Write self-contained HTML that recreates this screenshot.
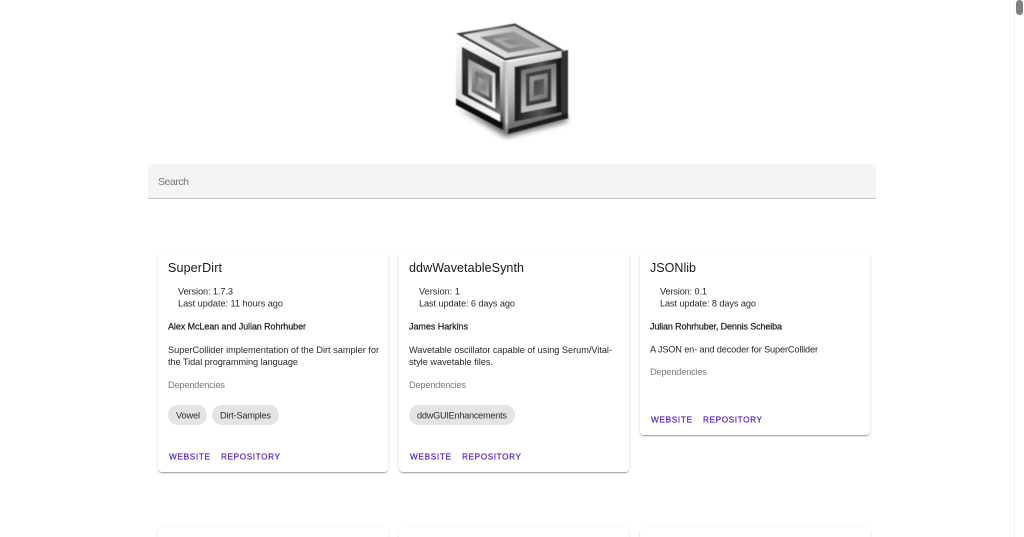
<!DOCTYPE html>
<html lang="en"><head><meta charset="utf-8"><title>Quarks</title>
<style>
html,body{margin:0;padding:0;background:#fff;overflow:hidden;height:537px}
body{width:1024px;height:537px;position:relative;font-family:"Liberation Sans",sans-serif}
.card{position:absolute;background:#fff;border-radius:4px;width:230px;box-shadow:0 2px 1px -1px rgba(0,0,0,.2),0 1px 1px 0 rgba(0,0,0,.14),0 1px 3px 0 rgba(0,0,0,.12)}
.search{position:absolute;left:148px;top:164px;width:728px;height:34px;background:#f5f5f5;border-bottom:1px solid #c4c4c4;border-radius:2px 2px 0 0}
.track{position:absolute;left:1014px;top:0;width:10px;height:537px;background:#fff;border-left:1px solid #efefef;box-sizing:border-box}
.thumb{position:absolute;left:1016px;top:0;width:7px;height:15px;background:#808080;border-radius:3.5px}
.chip{position:absolute;height:20px;border-radius:10px;background:#e4e4e4}
svg.t{position:absolute;left:0;top:0}
text{font-family:"Liberation Sans",sans-serif;fill:#222}
.h{font-size:12.5px;fill:#1a1a1a}
.b{font-size:9.2px;fill:#2a2a2a}
.s{font-size:9px;fill:#222;stroke:#222;stroke-width:.22px}
.d{font-size:9.2px;fill:#7a7a7a}
.c{font-size:9.2px;fill:#2c2c2c}
.a{font-size:8.2px;fill:#5a22c8;stroke:#5a22c8;stroke-width:.22px}
.q{font-size:10.5px;fill:#777}
</style></head><body>
<div class="search"></div>
<div class="card" style="left:158px;top:252px;height:220px"></div>
<div class="card" style="left:399px;top:252px;height:220px"></div>
<div class="card" style="left:640px;top:252px;height:183px"></div>
<div class="card" style="left:158px;top:528px;height:9px;border-radius:4px 4px 0 0"></div>
<div class="card" style="left:399px;top:528px;height:9px;border-radius:4px 4px 0 0"></div>
<div class="card" style="left:640px;top:528px;height:9px;border-radius:4px 4px 0 0"></div>
<div class="chip" style="left:168px;top:405px;width:39px"></div>
<div class="chip" style="left:212px;top:405px;width:67px"></div>
<div class="chip" style="left:409px;top:405px;width:106px"></div>
<div class="track"></div><div class="thumb"></div>

<svg class="t" width="1024" height="537" viewBox="0 0 1024 537" xmlns="http://www.w3.org/2000/svg">
<defs>
<filter id="bl" x="-30%" y="-100%" width="160%" height="300%"><feGaussianBlur stdDeviation="3"/></filter>
<filter id="sf" x="-5%" y="-5%" width="110%" height="110%"><feGaussianBlur stdDeviation=".45"/></filter>
<linearGradient id="l0" x1="0" y1="0" x2=".9" y2="1"><stop offset="0" stop-color="#fff"/><stop offset=".5" stop-color="#ddd"/><stop offset=".85" stop-color="#777"/><stop offset="1" stop-color="#222"/></linearGradient>
<linearGradient id="lb" x1="0" y1="0" x2="1" y2="0"><stop offset="0" stop-color="#ddd"/><stop offset="1" stop-color="#fff"/></linearGradient>
<linearGradient id="l1" x1="0" y1="0" x2="1" y2="1"><stop offset="0" stop-color="#3a3a3a"/><stop offset=".6" stop-color="#222"/><stop offset="1" stop-color="#777"/></linearGradient>
<linearGradient id="l2" x1="0" y1="0" x2="1" y2="1"><stop offset="0" stop-color="#999"/><stop offset=".6" stop-color="#ddd"/><stop offset="1" stop-color="#fff"/></linearGradient>
<linearGradient id="l3" x1="0" y1="0" x2="1" y2="1"><stop offset="0" stop-color="#aaa"/><stop offset="1" stop-color="#444"/></linearGradient>
<linearGradient id="l4" x1="0" y1="0" x2="1" y2="1"><stop offset="0" stop-color="#666"/><stop offset="1" stop-color="#aaa"/></linearGradient>
<linearGradient id="l5" x1="0" y1="0" x2="1" y2="1"><stop offset="0" stop-color="#aaa"/><stop offset="1" stop-color="#777"/></linearGradient>
<linearGradient id="r0" x1="0" y1="0" x2="0" y2="1"><stop offset="0" stop-color="#ddd"/><stop offset=".6" stop-color="#aaa"/><stop offset="1" stop-color="#666"/></linearGradient>
<linearGradient id="r1" x1="0" y1="0" x2="1" y2="0"><stop offset="0" stop-color="#1c1c1c"/><stop offset=".55" stop-color="#555"/><stop offset="1" stop-color="#111"/></linearGradient>
<linearGradient id="r2" x1="0" y1="0" x2="0" y2="1"><stop offset="0" stop-color="#777"/><stop offset="1" stop-color="#c4c4c4"/></linearGradient>
<linearGradient id="r3" x1="0" y1="0" x2="1" y2="1"><stop offset="0" stop-color="#444"/><stop offset="1" stop-color="#333"/></linearGradient>
<linearGradient id="r4" x1="0" y1="0" x2="1" y2="1"><stop offset="0" stop-color="#9a9a9a"/><stop offset="1" stop-color="#777"/></linearGradient>
<linearGradient id="r5" x1="0" y1="0" x2="1" y2="1"><stop offset="0" stop-color="#444"/><stop offset="1" stop-color="#666"/></linearGradient>
<linearGradient id="t0" x1="0" y1="0" x2="1" y2="0"><stop offset="0" stop-color="#333"/><stop offset=".6" stop-color="#777"/><stop offset="1" stop-color="#333"/></linearGradient>
<linearGradient id="t1" x1="0" y1="0" x2="1" y2="0"><stop offset="0" stop-color="#e4e4e4"/><stop offset="1" stop-color="#bbb"/></linearGradient>
<linearGradient id="t2" x1="0" y1="0" x2="1" y2="0"><stop offset="0" stop-color="#808080"/><stop offset="1" stop-color="#9a9a9a"/></linearGradient>
<linearGradient id="t3" x1="0" y1="0" x2="1" y2="0"><stop offset="0" stop-color="#b0b0b0"/><stop offset="1" stop-color="#929292"/></linearGradient>
</defs>

<polygon points="458,108 506,137 566,122 568,116 508,126" fill="#444" opacity=".8" filter="url(#bl)"/>

<g filter="url(#sf)">
<!-- top face -->
<g transform="matrix(.59 -.1 .49 .27 456 33.5)">
<rect width="100" height="100" fill="url(#t0)"/>
<rect x="6" y="7" width="88" height="86" fill="url(#t1)"/>
<rect x="22" y="22" width="58" height="58" fill="url(#t2)"/>
<rect x="34" y="34" width="34" height="34" fill="url(#t3)"/>
<rect x="43" y="43" width="16" height="16" fill="#8a8a8a"/>
</g>
<!-- left face -->
<g transform="matrix(.49 .26 0 .69 456 36)">
<rect width="100" height="100" fill="url(#l0)"/>
<rect x="0" y="80" width="90" height="10" fill="url(#lb)"/>
<rect x="0" y="90" width="100" height="10" fill="#0c0c0c"/>
<rect x="12" y="11" width="78" height="69" fill="url(#l1)"/>
<rect x="25" y="24" width="55" height="51" fill="url(#l2)"/>
<rect x="32" y="30" width="42" height="39" fill="url(#l3)"/>
<rect x="39" y="36" width="28" height="27" fill="url(#l4)"/>
<rect x="46" y="42" width="15" height="15" fill="url(#l5)"/>
</g>
<polygon points="503,61 509,62 509,131 503,132" fill="#999" opacity=".5"/>
<!-- right face -->
<g transform="matrix(.6 -.12 0 .685 508 62)">
<rect width="100" height="100" fill="url(#r0)"/>
<rect x="89" y="0" width="11" height="100" fill="#333"/>
<rect x="11" y="9" width="78" height="80" fill="url(#r1)"/>
<rect x="22" y="16" width="58" height="62" fill="url(#r2)"/>
<rect x="30" y="22" width="42" height="48" fill="url(#r3)"/>
<rect x="36" y="28" width="30" height="36" fill="url(#r4)"/>
<rect x="43" y="35" width="17" height="22" fill="url(#r5)"/>
</g>
<polygon points="508,129 568,113 568,118 508,134" fill="#1a1a1a"/>
</g>

<text class="q" x="158" y="185" textLength="31">Search</text>

<!-- card 1 -->
<text class="h" x="168" y="272" textLength="54">SuperDirt</text>
<text class="b" x="178" y="294.5" textLength="55">Version: 1.7.3</text>
<text class="b" x="178" y="306.5" textLength="105">Last update: 11 hours ago</text>
<text class="s" x="168" y="329.5" textLength="138">Alex McLean and Julian Rohrhuber</text>
<text class="b" x="168" y="353" textLength="211">SuperCollider implementation of the Dirt sampler for</text>
<text class="b" x="168" y="365" textLength="130">the Tidal programming language</text>
<text class="d" x="168" y="388" textLength="57">Dependencies</text>
<text class="c" x="176" y="418.5" textLength="24">Vowel</text>
<text class="c" x="220" y="418.5" textLength="51">Dirt-Samples</text>
<text class="a" x="169" y="459.5" textLength="41">WEBSITE</text>
<text class="a" x="221" y="459.5" textLength="59">REPOSITORY</text>

<!-- card 2 -->
<text class="h" x="409" y="272" textLength="115">ddwWavetableSynth</text>
<text class="b" x="419" y="294.5" textLength="41">Version: 1</text>
<text class="b" x="419" y="306.5" textLength="96">Last update: 6 days ago</text>
<text class="s" x="409" y="329.5" textLength="59">James Harkins</text>
<text class="b" x="409" y="353" textLength="203">Wavetable oscillator capable of using Serum/Vital-</text>
<text class="b" x="409" y="365" textLength="84">style wavetable files.</text>
<text class="d" x="409" y="388" textLength="57">Dependencies</text>
<text class="c" x="417" y="418.5" textLength="90">ddwGUIEnhancements</text>
<text class="a" x="410" y="459.5" textLength="41">WEBSITE</text>
<text class="a" x="462" y="459.5" textLength="59">REPOSITORY</text>

<!-- card 3 -->
<text class="h" x="650" y="272" textLength="46">JSONlib</text>
<text class="b" x="660" y="294.5" textLength="47">Version: 0.1</text>
<text class="b" x="660" y="306.5" textLength="96">Last update: 8 days ago</text>
<text class="s" x="650" y="329.5" textLength="132">Julian Rohrhuber, Dennis Scheiba</text>
<text class="b" x="650" y="352.5" textLength="168">A JSON en- and decoder for SuperCollider</text>
<text class="d" x="650" y="375" textLength="57">Dependencies</text>
<text class="a" x="651" y="422.5" textLength="41">WEBSITE</text>
<text class="a" x="703" y="422.5" textLength="59">REPOSITORY</text>
</svg>
</body></html>
